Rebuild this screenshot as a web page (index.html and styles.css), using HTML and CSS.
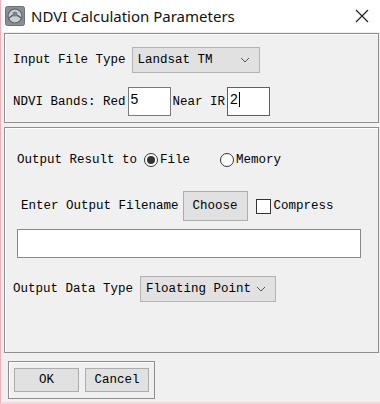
FILE: index.html
```html
<!DOCTYPE html>
<html>
<head>
<meta charset="utf-8">
<link rel="stylesheet" href="styles.css">
</head>
<body>
<div class="window">
  <div class="titlebar">
    <svg class="app-icon" width="20" height="20" viewBox="0 0 20 20">
      <rect x="0.5" y="0.5" width="19" height="19" rx="2" fill="#8a8f96" stroke="#6d7278"/>
      <circle cx="10" cy="10" r="7" fill="#c9ccd0" stroke="#5c6167" stroke-width="1.2"/>
      <path d="M4 12 Q10 6 16 12" fill="none" stroke="#5c6167" stroke-width="1.2"/>
      <circle cx="10" cy="8" r="2.5" fill="#7d8289"/>
    </svg>
    <span class="title">NDVI Calculation Parameters</span>
    <svg class="close" width="14" height="14" viewBox="0 0 14 14">
      <path d="M1 1 L13 13 M13 1 L1 13" stroke="#222" stroke-width="1.2"/>
    </svg>
  </div>
  <div class="content">
    <div class="panel panel-input">
      <div class="row row-type">
        <span class="lbl">Input File Type</span>
        <div class="select select-type">
          <span>Landsat TM</span>
          <svg class="chev" width="10" height="6" viewBox="0 0 10 6"><path d="M1 1 L5 5 L9 1" fill="none" stroke="#555" stroke-width="1"/></svg>
        </div>
      </div>
      <div class="row row-bands">
        <span class="lbl">NDVI Bands: Red</span>
        <div class="field">5</div>
        <span class="lbl">Near IR</span>
        <div class="field focused">2<span class="caret"></span></div>
      </div>
    </div>
    <div class="panel panel-output">
      <div class="row row-result">
        <span class="lbl">Output Result to</span>
        <span class="radio checked"></span>
        <span class="lbl">File</span>
        <span class="radio radio-mem"></span>
        <span class="lbl">Memory</span>
      </div>
      <div class="row row-file">
        <span class="lbl">Enter Output Filename</span>
        <div class="btn btn-choose">Choose</div>
        <span class="check"></span>
        <span class="lbl">Compress</span>
      </div>
      <div class="textbox"></div>
      <div class="row row-dtype">
        <span class="lbl">Output Data Type</span>
        <div class="select select-dtype">
          <span>Floating Point</span>
          <svg class="chev" width="10" height="6" viewBox="0 0 10 6"><path d="M1 1 L5 5 L9 1" fill="none" stroke="#555" stroke-width="1"/></svg>
        </div>
      </div>
    </div>
    <div class="panel panel-buttons">
      <div class="btn btn-ok">OK</div>
      <div class="btn btn-cancel">Cancel</div>
    </div>
  </div>
</div>
</body>
</html>
```
FILE: styles.css
```css
* { box-sizing: border-box; }
html, body { margin: 0; padding: 0; background: #f0f0f0; }
.window {
  width: 380px;
  height: 404px;
  background: #f0f0f0;
  border-left: 1px solid #eab4bc;
  border-bottom: 2px solid #f4d8dc;
  display: flex;
  flex-direction: column;
  font-family: "Liberation Mono", "DejaVu Sans Mono", monospace;
  font-size: 12.5px;
  color: #000;
}
.titlebar {
  height: 32px;
  background: #fff;
  display: flex;
  align-items: center;
  padding-left: 4px;
  padding-right: 11px;
  flex: none;
}
.app-icon { flex: none; }
.title {
  font-family: "Noto Sans", "Open Sans", sans-serif;
  font-size: 15px;
  margin-left: 6px;
  color: #111;
  flex: 1;
}
.close { flex: none; }
.content {
  flex: 1;
  display: flex;
  flex-direction: column;
  padding: 1px 1px 0 3px;
}
.panel {
  border: 1px solid #8e8e8e;
  box-shadow: inset 1px 1px 0 #fff;
}
.panel-input {
  height: 90px;
  padding: 13px 0 0 8px;
  display: flex;
  flex-direction: column;
  gap: 14px;
}
.row { display: flex; align-items: center; }
.lbl { white-space: pre; }
.select {
  display: flex;
  align-items: center;
  justify-content: space-between;
  background: #e1e1e1;
  border: 1px solid #b4b4b4;
  height: 26px;
  padding: 0 9px 0 5px;
}
.select-type { width: 128px; margin-left: 6px; }
.row-bands .lbl:first-child { margin-right: 2px; }
.field {
  width: 43px;
  height: 29px;
  background: #fff;
  border: 1px solid #7a7a7a;
  font-family: "Liberation Sans", Arial, sans-serif;
  font-size: 14px;
  padding: 3px 0 0 2px;
  margin-right: 2px;
  display: flex;
  align-items: flex-start;
}
.field.focused { border-color: #0078d7; margin-left: 2px; }
.caret { width: 1px; height: 15px; background: #000; margin-left: 1px; margin-top: 1px; }
.panel-output {
  margin-top: 4px;
  height: 226px;
  padding: 25px 0 0 12px;
  display: flex;
  flex-direction: column;
}
.radio {
  width: 14px;
  height: 14px;
  border-radius: 50%;
  border: 1px solid #333;
  background: #fff;
  margin-left: 7px;
  margin-right: 2px;
  position: relative;
}
.radio.checked::after {
  content: "";
  position: absolute;
  left: 2px; top: 2px;
  width: 8px; height: 8px;
  border-radius: 50%;
  background: #333;
}
.radio-mem { margin-left: 30px; }
.row-file { margin-top: 24px; margin-left: 4px; }
.btn {
  display: flex;
  align-items: center;
  justify-content: center;
  background: #e1e1e1;
  border: 1px solid #adadad;
}
.btn-choose { width: 65px; height: 30px; margin-left: 4px; }
.check {
  width: 15px; height: 15px;
  border: 1px solid #333;
  background: #fff;
  margin-left: 8px;
  margin-right: 3px;
}
.textbox {
  margin-top: 8px;
  width: 344px;
  height: 29px;
  flex: none;
  background: #fff;
  border: 1px solid #8a8a8a;
}
.row-dtype { margin-top: 18px; margin-left: -4px; }
.select-dtype { width: 136px; margin-left: 7px; }
.panel-buttons {
  margin: 8px 0 0 4px;
  width: 147px;
  height: 38px;
  display: flex;
  align-items: center;
  gap: 6px;
  padding-left: 5px;
}
.btn-ok { width: 65px; height: 24px; }
.btn-cancel { width: 64px; height: 24px; }
```
